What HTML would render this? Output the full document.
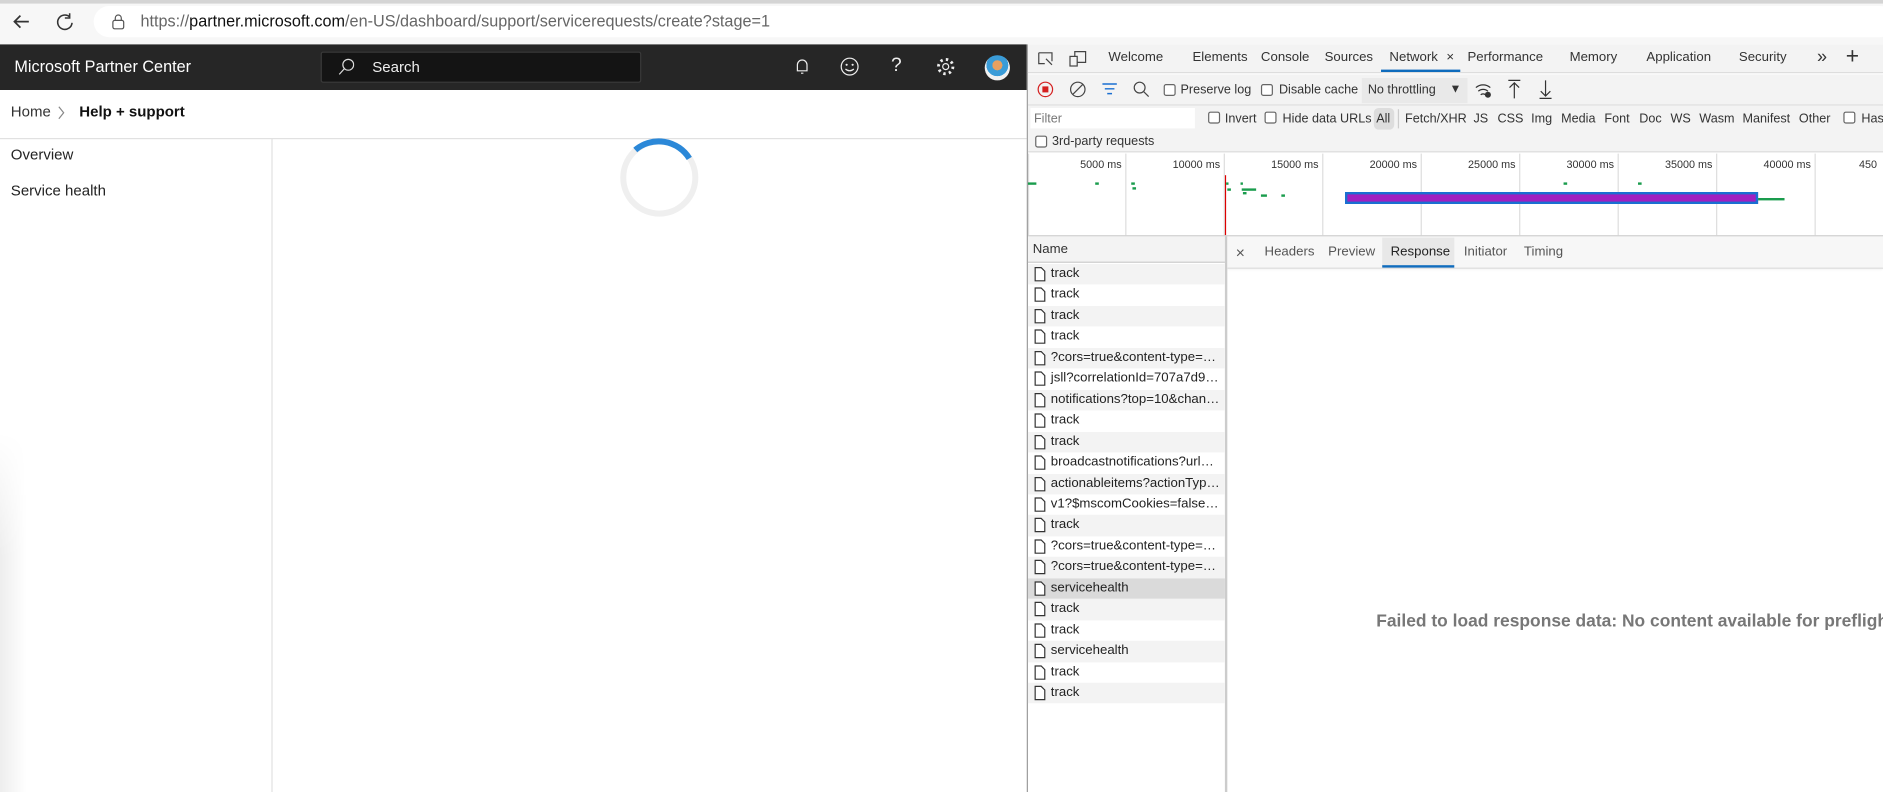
<!DOCTYPE html>
<html><head><meta charset="utf-8"><style>
*{box-sizing:border-box;margin:0;padding:0}
body{width:1883px;height:792px;overflow:hidden;background:#fff;font-family:"Liberation Sans",Arial,sans-serif}
#w{position:absolute;left:0;top:0;width:1568px;height:660px;transform:scale(1.20089,1.2);transform-origin:0 0;overflow:hidden}
.a{position:absolute;white-space:nowrap}
.dt{font-size:11px;color:#333}
.fr{font-size:10.5px}
.cb{position:absolute;width:10px;height:10px;border:1px solid #666;border-radius:2px;background:#fff}
.row{position:absolute;left:856px;width:164px;height:17.45px;font-size:11px;color:#222;line-height:17.45px;padding-left:19px;padding-right:4px;overflow:hidden;white-space:nowrap;text-overflow:ellipsis}
.row svg{position:absolute;left:5px;top:2px}
.tick{position:absolute;top:128px;height:68px;width:1px;background:#ddd}
.tl{position:absolute;top:132px;font-size:9px;color:#333;text-align:right;width:70px}
.dot{position:absolute;height:2px;background:#1a9c4d}
</style></head><body><div id="w">
<!-- browser bar -->
<div class="a" style="left:0;top:0;width:1568px;height:37px;background:#f7f7f7;border-top:3px solid #d4d4d4"></div>
<div class="a" style="left:78px;top:5px;width:1500px;height:26px;background:#fff;border-radius:13px"></div>
<svg class="a" style="left:9px;top:10px" width="18" height="16"><path d="M15 8H3M8 3 3 8l5 5" stroke="#333" stroke-width="1.4" fill="none"/></svg>
<svg class="a" style="left:46px;top:10px" width="16" height="16"><path d="M12 4A6 6 0 1 0 14 9M12 1v4h-4" stroke="#333" stroke-width="1.3" fill="none"/></svg>
<svg class="a" style="left:93px;top:11px" width="11" height="14"><rect x="1" y="6" width="9" height="7" rx="1.5" stroke="#555" fill="none"/><path d="M3 6V4a2.5 2.5 0 0 1 5 0v2" stroke="#555" fill="none"/></svg>
<div class="a" style="left:117px;top:10px;font-size:13.5px;color:#666">https://<span style="color:#111">partner.microsoft.com</span>/en-US/dashboard/support/servicerequests/create?stage=1</div>
<!-- header -->
<div class="a" style="left:0;top:37px;width:855px;height:38px;background:#262626"></div>
<div class="a" style="left:12px;top:48px;font-size:13.5px;color:#fff">Microsoft Partner Center</div>
<div class="a" style="left:267px;top:43px;width:267px;height:26px;background:#141414;border:1px solid #3a3a3a;border-radius:2px"></div>
<svg class="a" style="left:281px;top:48px" width="14" height="16"><circle cx="9" cy="6" r="4.5" stroke="#ddd" fill="none"/><path d="M6 9 1.5 14" stroke="#ddd"/></svg>
<div class="a" style="left:310px;top:49px;font-size:12.5px;color:#eee">Search</div>
<svg class="a" style="left:661px;top:47px" width="14" height="17"><path d="M3 12V7a4 4 0 0 1 8 0v5H3zM6 14h2" stroke="#eee" fill="none"/></svg>
<svg class="a" style="left:699px;top:47px" width="17" height="17"><circle cx="8.5" cy="8.5" r="7" stroke="#eee" fill="none"/><circle cx="6" cy="7" r=".9" fill="#eee"/><circle cx="11" cy="7" r=".9" fill="#eee"/><path d="M5 10.5q3.5 3 7 0" stroke="#eee" fill="none"/></svg>
<div class="a" style="left:742px;top:46px;font-size:16px;color:#eee">?</div>
<svg class="a" style="left:779px;top:47px" width="17" height="17"><circle cx="8.5" cy="8.5" r="2.5" stroke="#eee" fill="none"/><circle cx="8.5" cy="8.5" r="6" stroke="#eee" stroke-width="2.4" stroke-dasharray="2 2.7" fill="none"/></svg>
<div class="a" style="left:820px;top:46px;width:21px;height:21px;border-radius:50%;background:radial-gradient(circle at 50% 40%,#e8a060 0 25%,#3a9cd8 26% 55%,#f1f1f1 56%)"></div>
<!-- breadcrumb -->
<div class="a" style="left:9px;top:86px;font-size:12.5px;color:#333">Home</div>
<svg class="a" style="left:47px;top:88px" width="8" height="12"><path d="M2 1l4 5-4 5" stroke="#888" fill="none"/></svg>
<div class="a" style="left:66px;top:86px;font-size:12.5px;color:#111;font-weight:bold">Help + support</div>
<div class="a" style="left:0;top:115px;width:855px;height:1px;background:#e1e1e1"></div>
<div class="a" style="left:226px;top:115px;width:1px;height:545px;background:#e1e1e1"></div>
<div class="a" style="left:9px;top:122px;font-size:12.5px;color:#222">Overview</div>
<div class="a" style="left:9px;top:152px;font-size:12.5px;color:#222">Service health</div>
<svg class="a" style="left:514px;top:113px" width="70" height="70"><circle cx="35" cy="35" r="30" stroke="#efefef" stroke-width="5" fill="none"/><path d="M15 12A30 30 0 0 1 60 19" stroke="#2b88d8" stroke-width="5" fill="none"/></svg>
<div class="a" style="left:0;top:360px;width:22px;height:300px;background:linear-gradient(90deg,rgba(0,0,0,.07),rgba(0,0,0,0));-webkit-mask-image:linear-gradient(180deg,transparent,#000 35%)"></div>
<!-- devtools -->
<div class="a" style="left:855px;top:37px;width:1px;height:623px;background:#999"></div>
<div class="a" style="left:856px;top:37px;width:712px;height:623px;background:#fff"></div>
<div class="a" style="left:856px;top:37px;width:712px;height:24px;background:#f3f3f3;border-bottom:1px solid #ddd"></div>
<svg class="a" style="left:863px;top:42px" width="16" height="14"><path d="M2 2h11v7M2 2v9h5M8 7l5 5" stroke="#444" fill="none"/></svg>
<svg class="a" style="left:890px;top:42px" width="16" height="14"><rect x="1" y="5" width="6" height="8" stroke="#444" fill="none"/><path d="M5 5V1h9v9H7" stroke="#444" fill="none"/></svg>
<div class="a dt" style="left:923px;top:42px">Welcome</div>
<div class="a dt" style="left:993px;top:42px">Elements</div>
<div class="a dt" style="left:1050px;top:42px">Console</div>
<div class="a dt" style="left:1103px;top:42px">Sources</div>
<div class="a dt" style="left:1157px;top:42px">Network <span style="margin-left:4px">×</span></div>
<div class="a" style="left:1150px;top:58px;width:66px;height:2px;background:#0f6cbd"></div>
<div class="a dt" style="left:1222px;top:42px">Performance</div>
<div class="a dt" style="left:1307px;top:42px">Memory</div>
<div class="a dt" style="left:1371px;top:42px">Application</div>
<div class="a dt" style="left:1448px;top:42px">Security</div>
<div class="a dt" style="left:1513px;top:39px;font-size:15px">»</div>
<div class="a dt" style="left:1537px;top:37px;font-size:19px">+</div>
<!-- toolbar -->
<div class="a" style="left:856px;top:62px;width:712px;height:26px;background:#f3f3f3;border-bottom:1px solid #ddd"></div>
<svg class="a" style="left:863px;top:67px" width="15" height="15"><circle cx="7.5" cy="7.5" r="6" stroke="#d42020" fill="none"/><rect x="5" y="5" width="5" height="5" fill="#d42020"/></svg>
<svg class="a" style="left:890px;top:67px" width="15" height="15"><circle cx="7.5" cy="7.5" r="6" stroke="#444" fill="none"/><path d="M3.5 11.5l8-8" stroke="#444"/></svg>
<svg class="a" style="left:917px;top:68px" width="14" height="12"><path d="M1 2h12M3 6h8M5 10h4" stroke="#1a6fd1" stroke-width="1.2"/></svg>
<svg class="a" style="left:943px;top:67px" width="15" height="15"><circle cx="6" cy="6" r="4.5" stroke="#444" fill="none"/><path d="M9.5 9.5 13.5 13.5" stroke="#444"/></svg>
<div class="cb" style="left:969px;top:70px"></div><div class="a dt fr" style="left:983px;top:69px">Preserve log</div>
<div class="cb" style="left:1050px;top:70px"></div><div class="a dt fr" style="left:1065px;top:69px">Disable cache</div>
<div class="a" style="left:1134px;top:65px;width:88px;height:21px;background:#e9e9e9"></div>
<div class="a dt fr" style="left:1139px;top:69px">No throttling</div>
<div class="a dt" style="left:1207px;top:69px;font-size:10px">▼</div>
<svg class="a" style="left:1228px;top:68px" width="15" height="15"><path d="M1 5a9 9 0 0 1 12 0M3 8a6 6 0 0 1 8 0M5 11a3 3 0 0 1 4 0" stroke="#333" fill="none"/><circle cx="11" cy="11" r="2.5" fill="#333"/></svg>
<svg class="a" style="left:1255px;top:66px" width="12" height="17"><path d="M1 1h10M6 3v13M2 7l4-4 4 4" stroke="#333" fill="none"/></svg>
<svg class="a" style="left:1281px;top:66px" width="12" height="17"><path d="M1 16h10M6 1v13M2 10l4 4 4-4" stroke="#333" fill="none"/></svg>
<!-- filter row -->
<div class="a" style="left:856px;top:88px;width:712px;height:39px;background:#f3f3f3;border-bottom:1px solid #ddd"></div>
<div class="a" style="left:858px;top:90px;width:137px;height:17px;background:#fff"></div>
<div class="a dt fr" style="left:861px;top:93px;color:#777">Filter</div>
<div class="cb" style="left:1006px;top:93px"></div><div class="a dt fr" style="left:1020px;top:93px">Invert</div>
<div class="cb" style="left:1053px;top:93px"></div><div class="a dt fr" style="left:1068px;top:93px">Hide data URLs</div>
<div class="a" style="left:1144px;top:90px;width:17px;height:18px;background:#ddd;border-radius:4px"></div>
<div class="a dt fr" style="left:1146px;top:93px">All</div>
<div class="a" style="left:1164px;top:91px;width:1px;height:16px;background:#ccc"></div>
<div class="a dt fr" style="left:1170px;top:93px">Fetch/XHR</div>
<div class="a dt fr" style="left:1227px;top:93px">JS</div>
<div class="a dt fr" style="left:1247px;top:93px">CSS</div>
<div class="a dt fr" style="left:1275px;top:93px">Img</div>
<div class="a dt fr" style="left:1300px;top:93px">Media</div>
<div class="a dt fr" style="left:1336px;top:93px">Font</div>
<div class="a dt fr" style="left:1365px;top:93px">Doc</div>
<div class="a dt fr" style="left:1391px;top:93px">WS</div>
<div class="a dt fr" style="left:1415px;top:93px">Wasm</div>
<div class="a dt fr" style="left:1451px;top:93px">Manifest</div>
<div class="a dt fr" style="left:1498px;top:93px">Other</div>
<div class="cb" style="left:1535px;top:93px"></div><div class="a dt fr" style="left:1550px;top:93px">Has</div>
<div class="cb" style="left:862px;top:113px"></div><div class="a dt fr" style="left:876px;top:112px">3rd-party requests</div>
<!-- timeline -->
<div class="tick" style="left:856px"></div>
<div class="tick" style="left:937px"></div><div class="tl" style="left:864px">5000 ms</div>
<div class="tick" style="left:1019px"></div><div class="tl" style="left:946px">10000 ms</div>
<div class="tick" style="left:1101px"></div><div class="tl" style="left:1028px">15000 ms</div>
<div class="tick" style="left:1183px"></div><div class="tl" style="left:1110px">20000 ms</div>
<div class="tick" style="left:1265px"></div><div class="tl" style="left:1192px">25000 ms</div>
<div class="tick" style="left:1347px"></div><div class="tl" style="left:1274px">30000 ms</div>
<div class="tick" style="left:1429px"></div><div class="tl" style="left:1356px">35000 ms</div>
<div class="tick" style="left:1511px"></div><div class="tl" style="left:1438px">40000 ms</div>
<div class="a" style="left:1548px;top:132px;font-size:9px;color:#333">450</div>
<div class="a" style="left:1020px;top:146px;width:1px;height:50px;background:#d00"></div>
<div class="dot" style="left:856px;top:152px;width:7px"></div>
<div class="dot" style="left:912px;top:152px;width:3px"></div>
<div class="dot" style="left:942px;top:152px;width:3px"></div><div class="dot" style="left:943px;top:156px;width:3px"></div>
<div class="dot" style="left:1021px;top:152px;width:2px"></div><div class="dot" style="left:1033px;top:152px;width:2px"></div>
<div class="dot" style="left:1022px;top:157px;width:3px"></div><div class="dot" style="left:1034px;top:157px;width:12px"></div><div class="dot" style="left:1035px;top:160px;width:3px"></div>
<div class="dot" style="left:1050px;top:162px;width:5px"></div><div class="dot" style="left:1067px;top:162px;width:3px"></div>
<div class="dot" style="left:1302px;top:152px;width:3px"></div><div class="dot" style="left:1364px;top:152px;width:3px"></div>
<div class="a" style="left:1120px;top:160px;width:344px;height:10px;background:#a020c0;border:2px solid #1a6fd1"></div>
<div class="dot" style="left:1464px;top:165px;width:22px"></div>
<div class="a" style="left:856px;top:196px;width:712px;height:1px;background:#ccc"></div>
<!-- name column -->
<div class="a" style="left:856px;top:197px;width:164px;height:22px;background:#f3f3f3;border-bottom:1px solid #ccc"></div>
<div class="a dt" style="left:860px;top:202px">Name</div>
<div class="a" style="left:1020px;top:197px;width:2px;height:463px;background:#ccc"></div>
<div id="rows"></div>
<!-- detail tabs -->
<div class="a" style="left:1022px;top:197px;width:546px;height:27px;background:#f7f7f7;border-bottom:1px solid #ddd;box-shadow:0 1px 2px rgba(0,0,0,.06)"></div>
<div class="a dt" style="left:1029px;top:203px;font-size:13px;color:#555">×</div>
<div class="a dt" style="left:1053px;top:204px;color:#555">Headers</div>
<div class="a dt" style="left:1106px;top:204px;color:#555">Preview</div>
<div class="a" style="left:1151px;top:198px;width:60px;height:24px;background:#e8e8e8"></div>
<div class="a dt" style="left:1158px;top:204px;color:#222">Response</div>
<div class="a" style="left:1151px;top:221px;width:60px;height:2px;background:#0f6cbd"></div>
<div class="a dt" style="left:1219px;top:204px;color:#555">Initiator</div>
<div class="a dt" style="left:1269px;top:204px;color:#555">Timing</div>
<div class="a" style="left:1146px;top:510px;font-size:14.5px;font-weight:bold;color:#777">Failed to load response data: No content available for preflight request</div>
</div>
<script>
var n=["track","track","track","track","?cors=true&amp;content-type=application","jsll?correlationId=707a7d94-abcdef","notifications?top=10&amp;channel=all","track","track","broadcastnotifications?url=https","actionableitems?actionType=all","v1?$mscomCookies=false&amp;extra","track","?cors=true&amp;content-type=application","?cors=true&amp;content-type=application","servicehealth","track","track","servicehealth","track","track"];
var h="";for(var i=0;i<n.length;i++){var t=220+i*17.45;var bg=i==15?"background:#dadada":(i%2==0?"background:#f3f3f3":"");
h+='<div class="row" style="top:'+t+'px;'+bg+'"><svg width="10" height="13"><path d="M1 1h5l3 3v8H1z" stroke="#333" fill="#fff"/></svg>'+n[i]+'</div>';}
document.getElementById("rows").outerHTML=h;
</script>
</body></html>
